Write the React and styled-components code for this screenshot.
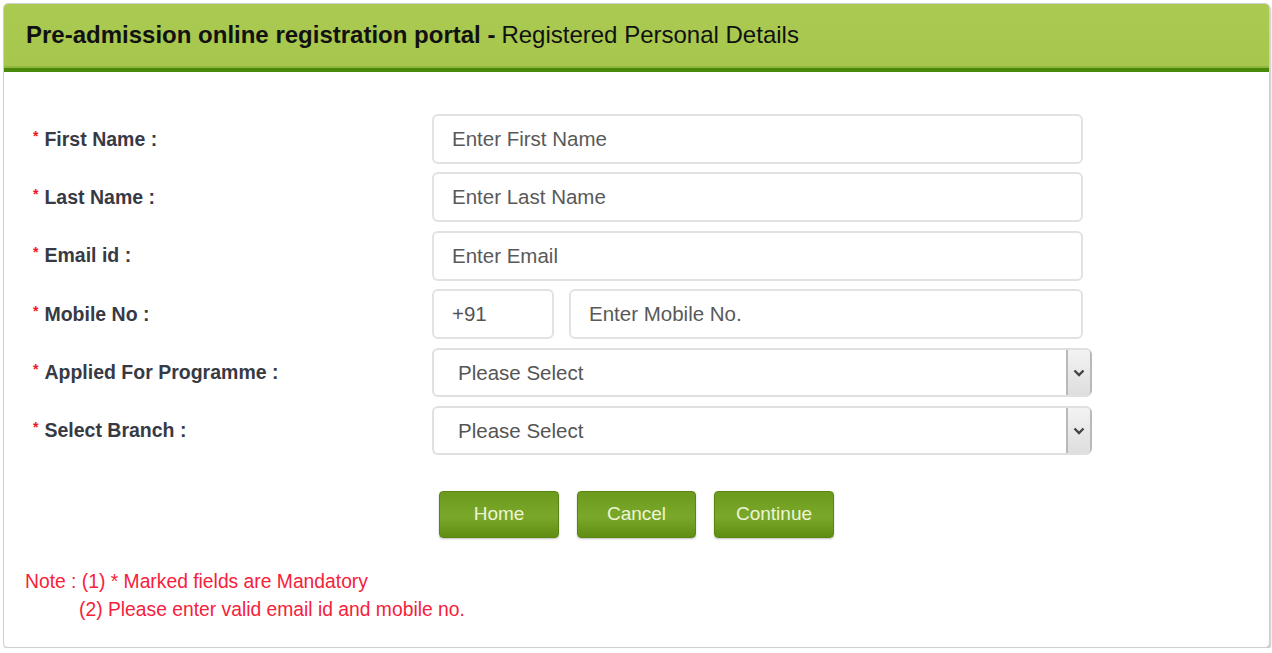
import React from "react";
import styled, { createGlobalStyle } from "styled-components";

const Global = createGlobalStyle`
  html, body { margin: 0; padding: 0; background: #ffffff; }
  body { font-family: "Liberation Sans", Arial, sans-serif; }
  * { box-sizing: border-box; }
`;

const Panel = styled.div`
  margin: 3px 0 0 3px;
  width: 1267px;
  height: 645px;
  border: 1px solid #cfcfcf;
  border-radius: 5px;
  box-shadow: 1px 2px 2px rgba(0, 0, 0, 0.22);
  overflow: hidden;
  background: #fff;
  display: flex;
  flex-direction: column;
`;

const Header = styled.div`
  height: 68px;
  background: linear-gradient(#abca52, #a6c64c);
  border-bottom: 4px solid #4a8a0a;
  box-shadow: inset 0 -2px 0 #8fb83c;
  display: flex;
  align-items: center;
  padding: 0 0 3px 22px;
  font-size: 24px;
  color: #111;
  white-space: nowrap;
`;

const Strong = styled.span`
  font-weight: bold;
  margin-right: 6px;
`;

const Body = styled.div`
  padding: 42px 0 0 29px;
  display: flex;
  flex-direction: column;
`;

const Form = styled.div`
  display: flex;
  flex-direction: column;
  gap: 8.4px;
`;

const Row = styled.div`
  display: grid;
  grid-template-columns: 399px auto;
  align-items: center;
  height: 50px;
`;

const Label = styled.label`
  display: flex;
  align-items: flex-start;
  font-size: 19.5px;
  font-weight: bold;
  color: #373a44;
  white-space: nowrap;
`;

const Star = styled.span`
  color: #f0141e;
  font-size: 14px;
  margin-right: 6px;
  line-height: 1;
  padding-top: 1px;
`;

const Input = styled.input`
  width: ${(p) => p.$w}px;
  height: 50px;
  border: 2px solid #e2e2e2;
  border-radius: 6px;
  padding: 0 0 0 18px;
  font-family: "Liberation Sans", Arial, sans-serif;
  font-size: 20.5px;
  color: #555;
  background: #fff;
  outline: none;
  &::placeholder { color: #595959; }
`;

const MobileGroup = styled.div`
  display: flex;
  gap: 15px;
`;

const CodeBox = styled.div`
  width: 122px;
  height: 50px;
  border: 2px solid #e2e2e2;
  border-radius: 6px;
  padding-left: 18px;
  display: flex;
  align-items: center;
  font-size: 20.5px;
  color: #555;
`;

const SelectWrap = styled.div`
  width: 660px;
  height: 49px;
  display: flex;
  border: 2px solid #e0e0e0;
  border-right: none;
  border-radius: 6px;
  overflow: hidden;
  background: #fff;
`;

const Select = styled.select`
  flex: 1;
  appearance: none;
  border: none;
  background: transparent;
  padding-left: 24px;
  font-family: "Liberation Sans", Arial, sans-serif;
  font-size: 20.5px;
  color: #555;
  outline: none;
`;

const ArrowBox = styled.div`
  width: 26px;
  border: 2px solid #b9b9b9;
  border-radius: 0 5px 5px 0;
  margin: -2px 0;
  background: linear-gradient(#f3f3f3, #dedede);
  display: flex;
  align-items: center;
  justify-content: center;
`;

const Buttons = styled.div`
  display: flex;
  justify-content: center;
  gap: 18px;
  margin: 35px 0 0 -29px;
`;

const Button = styled.button`
  width: ${(p) => p.$w}px;
  height: 47px;
  border: 1px solid #5a8512;
  border-radius: 4px;
  background: linear-gradient(#6b9a1c, #7aa82a 55%, #5f8e12);
  box-shadow: 0 1px 2px rgba(0, 0, 0, 0.25);
  color: #eef5d6;
  font-family: "Liberation Sans", Arial, sans-serif;
  font-size: 19px;
  cursor: pointer;
`;

const Note = styled.div`
  margin: 30px 0 0 -8px;
  color: #f5213a;
  font-size: 19.3px;
  line-height: 28px;
`;

const Indent = styled.div`
  padding-left: 54px;
`;

const Chevron = () => (
  <svg width="12" height="8" viewBox="0 0 12 8">
    <path d="M1.5 1.5 L6 6 L10.5 1.5" fill="none" stroke="#444" strokeWidth="2.4" />
  </svg>
);

const fields = [
  { label: "First Name :", ph: "Enter First Name" },
  { label: "Last Name :", ph: "Enter Last Name" },
  { label: "Email id :", ph: "Enter Email" },
];

export default function App() {
  return (
    <>
      <Global />
      <Panel>
        <Header>
          <Strong>Pre-admission online registration portal -</Strong>
          Registered Personal Details
        </Header>
        <Body>
          <Form>
            {fields.map((f) => (
              <Row key={f.label}>
                <Label>
                  <Star>*</Star>
                  {f.label}
                </Label>
                <Input $w={651} placeholder={f.ph} />
              </Row>
            ))}
            <Row>
              <Label>
                <Star>*</Star>Mobile No :
              </Label>
              <MobileGroup>
                <CodeBox>+91</CodeBox>
                <Input $w={514} placeholder="Enter Mobile No." />
              </MobileGroup>
            </Row>
            <Row>
              <Label>
                <Star>*</Star>Applied For Programme :
              </Label>
              <SelectWrap>
                <Select defaultValue="">
                  <option value="">Please Select</option>
                </Select>
                <ArrowBox>
                  <Chevron />
                </ArrowBox>
              </SelectWrap>
            </Row>
            <Row>
              <Label>
                <Star>*</Star>Select Branch :
              </Label>
              <SelectWrap>
                <Select defaultValue="">
                  <option value="">Please Select</option>
                </Select>
                <ArrowBox>
                  <Chevron />
                </ArrowBox>
              </SelectWrap>
            </Row>
          </Form>
          <Buttons>
            <Button $w={120}>Home</Button>
            <Button $w={119}>Cancel</Button>
            <Button $w={120}>Continue</Button>
          </Buttons>
          <Note>
            <div>Note : (1) * Marked fields are Mandatory</div>
            <Indent>(2) Please enter valid email id and mobile no.</Indent>
          </Note>
        </Body>
      </Panel>
    </>
  );
}
